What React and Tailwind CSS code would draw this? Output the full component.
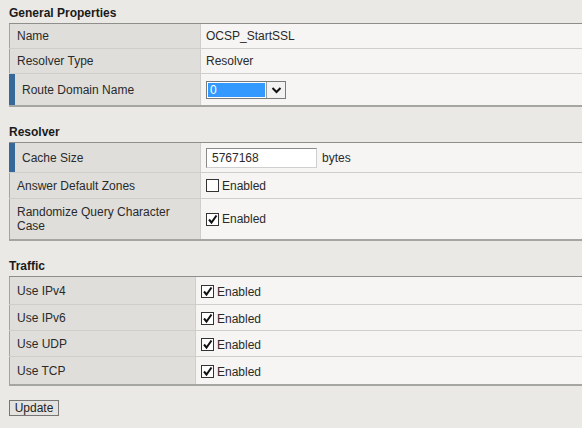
import React from "react";

function Check({ checked }) {
  return (
    <span className="inline-flex h-[13px] w-[13px] items-center justify-center border border-[#333] bg-white mr-[3px]">
      {checked && (
        <svg width="11" height="11" viewBox="0 0 11 11">
          <path d="M2 5.5 L4.5 8.5 L9.5 1.5" stroke="#111" strokeWidth="2" fill="none" />
        </svg>
      )}
    </span>
  );
}

function Row({ label, h, labelW, marked, last, children }) {
  return (
    <div className={`flex ${last ? "" : "border-b border-[#cfcecb]"}`} style={{ height: h }}>
      <div
        className={`flex shrink-0 items-center bg-[#dfdedb] border-r border-[#cfcecb] ${marked ? "border-l-[6px] border-l-[#36699a] pl-[7px]" : "border-l border-l-[#a3a3a0] pl-[7px]"}`}
        style={{ width: labelW }}
      >
        <span className="leading-[14px]">{label}</span>
      </div>
      <div className="flex flex-1 items-center bg-[#f6f5f3] pl-[5px]">{children}</div>
    </div>
  );
}

function Section({ title, first, children }) {
  return (
    <div className={first ? "" : "mt-[12px]"}>
      <div className="h-[23px] pt-[4px] font-bold text-[12px] text-[#1a1a1a]">{title}</div>
      <div className="border-t border-[#8e8e8b] border-b-2 border-b-[#a5a5a2]">{children}</div>
    </div>
  );
}

function Enabled({ checked, offset }) {
  return (
    <span className={`flex items-center ${offset}`}>
      <Check checked={checked} />
      <span>Enabled</span>
    </span>
  );
}

export default function App() {
  return (
    <div className="min-h-[428px] bg-[#eae9e6] pl-[9px] text-[12px] text-[#2a2a2a]" style={{ fontFamily: '"Liberation Sans", Arial, sans-serif' }}>
      <Section title="General Properties" first>
        <Row label="Name" h={25} labelW={192}>OCSP_StartSSL</Row>
        <Row label="Resolver Type" h={25} labelW={192}>Resolver</Row>
        <Row label="Route Domain Name" h={31} labelW={192} marked last>
          <div className="flex h-[18px] w-[80px] items-stretch border border-[#7a7a7a] bg-white">
            <div className="m-[1px] flex flex-1 items-center bg-[#3399ff] pl-[2px] text-white">0</div>
            <div className="flex w-[19px] items-center justify-center border-l border-[#9a9a9a] bg-[#f2f2f2]">
              <svg width="11" height="8" viewBox="0 0 11 8">
                <path d="M1.5 2 L5.5 6 L9.5 2" stroke="#111" strokeWidth="2" fill="none" />
              </svg>
            </div>
          </div>
        </Row>
      </Section>

      <Section title="Resolver">
        <Row label="Cache Size" h={30} labelW={192} marked>
          <div className="flex h-[20px] w-[111px] items-center border border-[#8a8a8a] border-r-[#cfcfcf] border-b-[#cfcfcf] bg-white pl-[5px]">5767168</div>
          <span className="ml-[5px]">bytes</span>
        </Row>
        <Row label="Answer Default Zones" h={26} labelW={192}>
          <Enabled checked={false} />
        </Row>
        <Row label="Randomize Query Character Case" h={40} labelW={192} last>
          <Enabled checked />
        </Row>
      </Section>

      <Section title="Traffic">
        <Row label="Use IPv4" h={28} labelW={187}>
          <Enabled checked offset="mt-[2px]" />
        </Row>
        <Row label="Use IPv6" h={26} labelW={187}>
          <Enabled checked offset="mt-[2px]" />
        </Row>
        <Row label="Use UDP" h={26} labelW={187}>
          <Enabled checked offset="mt-[2px]" />
        </Row>
        <Row label="Use TCP" h={27} labelW={187} last>
          <Enabled checked offset="mt-[2px]" />
        </Row>
      </Section>

      <button className="mt-[14px] h-[16px] w-[50px] border border-[#767676] bg-[#e4e3e0] text-[12px] leading-[14px] text-[#222]">
        Update
      </button>
    </div>
  );
}
